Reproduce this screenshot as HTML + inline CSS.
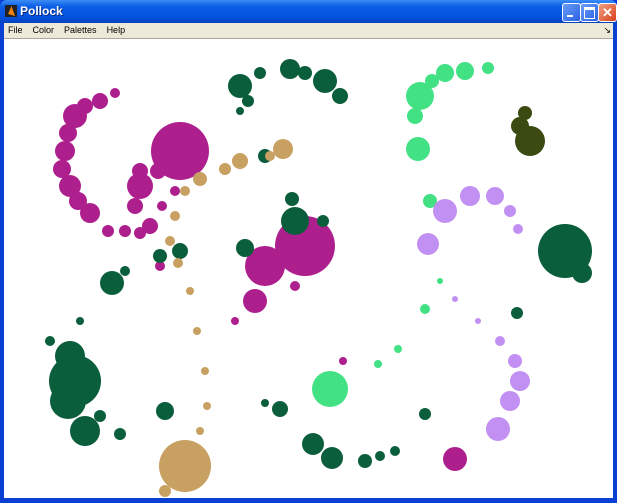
<!DOCTYPE html>
<html><head><style>
body{margin:0;width:617px;height:500px;overflow:hidden;background:#0a3fd4;font-family:"Liberation Sans",sans-serif}
.tb{position:absolute;left:0;top:0;width:617px;height:23px;background:linear-gradient(#3b8cf5,#0a5ce6 30%,#0554e0 70%,#0342c0);border-radius:7px 7px 0 0}
.tt{position:absolute;left:20px;top:4px;color:#fff;font-weight:bold;font-size:12px;text-shadow:1px 1px #0a2a80}
.ic{position:absolute;left:5px;top:5px;width:12px;height:12px;background:#222}
.ic:after{content:"";position:absolute;left:3px;top:1px;width:7px;height:10px;background:#f08010;clip-path:polygon(50% 0,100% 100%,0 80%)}
.bt{position:absolute;top:3px;width:17px;height:17px;border:1px solid #fff;border-radius:3px;background:linear-gradient(135deg,#6a9cf8,#2a62e4)}
.menu{position:absolute;left:4px;top:23px;width:609px;height:15px;background:#ece9d8;font-size:9px;line-height:15px}
.menu span{margin-left:4px;margin-right:6px}
.cv{position:absolute;left:4px;top:38px;width:609px;height:459px;background:#fff;border-top:1px solid #aca899}
</style></head><body>
<div class="tb"><div class="ic"></div><div class="tt">Pollock</div>
<div class="bt" style="left:562px"><div style="position:absolute;left:4px;top:11px;width:6px;height:2px;background:#fff"></div></div>
<div class="bt" style="left:580px"><div style="position:absolute;left:3px;top:3px;width:9px;height:8px;border:1px solid #fff;border-top-width:3px"></div></div>
<div class="bt" style="left:598px;background:linear-gradient(135deg,#f0a080,#d8401c);color:#fff;font-size:13px;font-weight:bold;text-align:center;line-height:17px">✕</div></div>
<div class="menu"><span>File</span><span>Color</span><span>Palettes</span><span>Help</span><span style="position:absolute;right:2px;margin:0">↘</span></div>
<div class="cv"><svg width="609" height="459" viewBox="4 38 609 459">
<g fill="#ae1f8e">
<circle cx="180" cy="150" r="29"/><circle cx="140" cy="185" r="13"/><circle cx="140" cy="170" r="8"/><circle cx="135" cy="205" r="8"/>
<circle cx="75" cy="115" r="12"/><circle cx="85" cy="105" r="8"/><circle cx="68" cy="132" r="9"/><circle cx="65" cy="150" r="10"/><circle cx="62" cy="168" r="9"/><circle cx="70" cy="185" r="11"/><circle cx="78" cy="200" r="9"/><circle cx="90" cy="212" r="10"/><circle cx="100" cy="100" r="8"/><circle cx="115" cy="92" r="5"/><circle cx="125" cy="230" r="6"/><circle cx="108" cy="230" r="6"/><circle cx="140" cy="232" r="6"/><circle cx="150" cy="225" r="8"/><circle cx="158" cy="170" r="8"/>
<circle cx="305" cy="245" r="30"/><circle cx="265" cy="265" r="20"/><circle cx="255" cy="300" r="12"/><circle cx="160" cy="265" r="5"/><circle cx="235" cy="320" r="4"/><circle cx="455" cy="458" r="12"/><circle cx="343" cy="360" r="4"/><circle cx="162" cy="205" r="5"/><circle cx="175" cy="190" r="5"/><circle cx="295" cy="285" r="5"/>
</g>
<g fill="#0b5e3b">
<circle cx="75" cy="380" r="26"/><circle cx="70" cy="355" r="15"/><circle cx="68" cy="400" r="18"/><circle cx="85" cy="430" r="15"/><circle cx="100" cy="415" r="6"/><circle cx="112" cy="282" r="12"/><circle cx="125" cy="270" r="5"/><circle cx="120" cy="433" r="6"/><circle cx="165" cy="410" r="9"/><circle cx="160" cy="255" r="7"/><circle cx="180" cy="250" r="8"/>
<circle cx="240" cy="85" r="12"/><circle cx="248" cy="100" r="6"/><circle cx="260" cy="72" r="6"/><circle cx="290" cy="68" r="10"/><circle cx="305" cy="72" r="7"/><circle cx="325" cy="80" r="12"/><circle cx="340" cy="95" r="8"/><circle cx="295" cy="220" r="14"/><circle cx="292" cy="198" r="7"/><circle cx="245" cy="247" r="9"/><circle cx="265" cy="155" r="7"/><circle cx="323" cy="220" r="6"/>
<circle cx="565" cy="250" r="27"/><circle cx="582" cy="272" r="10"/><circle cx="313" cy="443" r="11"/><circle cx="332" cy="457" r="11"/><circle cx="365" cy="460" r="7"/><circle cx="380" cy="455" r="5"/><circle cx="395" cy="450" r="5"/><circle cx="425" cy="413" r="6"/><circle cx="280" cy="408" r="8"/><circle cx="265" cy="402" r="4"/><circle cx="517" cy="312" r="6"/><circle cx="80" cy="320" r="4"/><circle cx="50" cy="340" r="5"/><circle cx="240" cy="110" r="4"/>
</g>
<g fill="#c8a062">
<circle cx="185" cy="465" r="26"/><circle cx="165" cy="490" r="6"/><circle cx="283" cy="148" r="10"/><circle cx="270" cy="155" r="5"/><circle cx="240" cy="160" r="8"/><circle cx="225" cy="168" r="6"/><circle cx="200" cy="178" r="7"/><circle cx="185" cy="190" r="5"/><circle cx="175" cy="215" r="5"/><circle cx="170" cy="240" r="5"/><circle cx="178" cy="262" r="5"/><circle cx="190" cy="290" r="4"/><circle cx="197" cy="330" r="4"/><circle cx="205" cy="370" r="4"/><circle cx="207" cy="405" r="4"/><circle cx="200" cy="430" r="4"/>
</g>
<g fill="#42e184">
<circle cx="330" cy="388" r="18"/><circle cx="418" cy="148" r="12"/><circle cx="420" cy="95" r="14"/><circle cx="415" cy="115" r="8"/><circle cx="432" cy="80" r="7"/><circle cx="445" cy="72" r="9"/><circle cx="465" cy="70" r="9"/><circle cx="488" cy="67" r="6"/><circle cx="430" cy="200" r="7"/><circle cx="425" cy="308" r="5"/><circle cx="398" cy="348" r="4"/><circle cx="378" cy="363" r="4"/><circle cx="440" cy="280" r="3"/>
</g>
<g fill="#c190f2">
<circle cx="428" cy="243" r="11"/><circle cx="445" cy="210" r="12"/><circle cx="470" cy="195" r="10"/><circle cx="495" cy="195" r="9"/><circle cx="510" cy="210" r="6"/><circle cx="518" cy="228" r="5"/><circle cx="520" cy="380" r="10"/><circle cx="515" cy="360" r="7"/><circle cx="510" cy="400" r="10"/><circle cx="498" cy="428" r="12"/><circle cx="455" cy="298" r="3"/><circle cx="478" cy="320" r="3"/><circle cx="500" cy="340" r="5"/>
</g>
<g fill="#3a4a10"><circle cx="530" cy="140" r="15"/><circle cx="520" cy="125" r="9"/><circle cx="525" cy="112" r="7"/></g>
</svg></div>
</body></html>
